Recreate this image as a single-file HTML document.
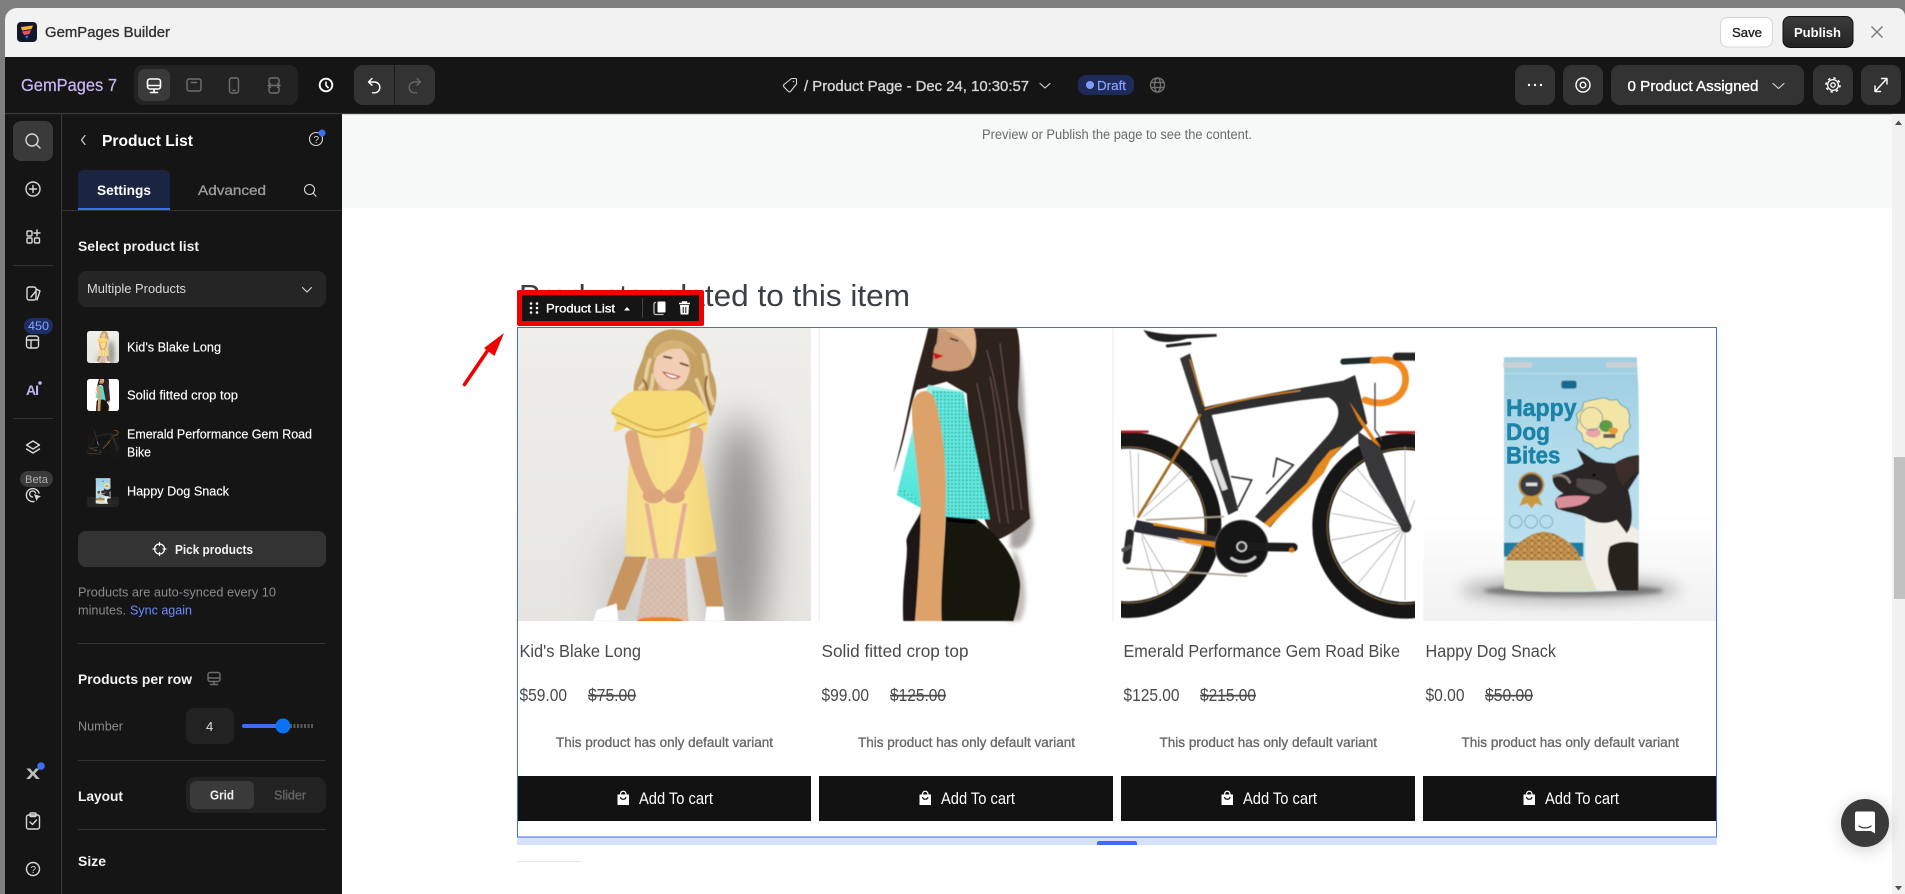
<!DOCTYPE html>
<html><head><meta charset="utf-8"><title>GemPages Builder</title>
<style>
html,body{margin:0;padding:0;background:#fff;width:1905px;height:894px;overflow:hidden}
svg{display:block}
text{font-family:"Liberation Sans",sans-serif;white-space:pre}
.w{fill:#fff}
.m{stroke:currentColor;stroke-width:.35}
.i{fill:none;stroke:#d8d8d8;stroke-width:1.4;stroke-linecap:round;stroke-linejoin:round}
.c{fill:none;stroke:#d8d8d8;stroke-width:1.1;stroke-linecap:round;stroke-linejoin:round}
.b{fill:none;stroke:#fff;stroke-width:1.6;stroke-linecap:round;stroke-linejoin:round}
.d{fill:none;stroke:#6f6f6f;stroke-width:1.4;stroke-linecap:round;stroke-linejoin:round}
.title{font-size:17.5px;fill:#4a4a4a}
.price{font-size:17.5px;fill:#4a4a4a}
.var{font-size:13.5px;fill:#6a6a6a;stroke:#6a6a6a;stroke-width:.35}
.cart{font-size:16.5px;fill:#fff}
.pl{font-size:13px;fill:#fff;color:#fff;stroke:#fff;stroke-width:.15}
</style></head>
<body>
<svg xmlns="http://www.w3.org/2000/svg" width="1905" height="894" viewBox="0 0 1905 894">
<defs>
<filter id="bl40" x="-80%" y="-50%" width="260%" height="200%"><feGaussianBlur stdDeviation="55"/></filter>
<filter id="bl20" x="-50%" y="-50%" width="200%" height="200%"><feGaussianBlur stdDeviation="22"/></filter>
<filter id="bl6" x="-30%" y="-30%" width="160%" height="160%"><feGaussianBlur stdDeviation="6"/></filter>
<filter id="soft" x="-5%" y="-5%" width="110%" height="110%"><feGaussianBlur stdDeviation="1.8"/></filter>
<filter id="sh" x="-50%" y="-50%" width="200%" height="200%"><feGaussianBlur stdDeviation="7"/></filter>
<linearGradient id="floor" x1="0" y1="0" x2="0" y2="1"><stop offset="0" stop-color="#fff"/><stop offset="1" stop-color="#f1f1f1"/></linearGradient>
<linearGradient id="bag" x1="0" y1="0" x2="0" y2="1"><stop offset="0" stop-color="#9ccde0"/><stop offset=".4" stop-color="#b2dbeb"/><stop offset="1" stop-color="#bfe3f1"/></linearGradient>
<linearGradient id="pub" x1="0" y1="0" x2="0" y2="1"><stop offset="0" stop-color="#3d3d3d"/><stop offset="1" stop-color="#232323"/></linearGradient>
<linearGradient id="dress" x1="0" y1="0" x2="1" y2="0"><stop offset="0" stop-color="#f3dc8e"/><stop offset=".6" stop-color="#fae18a"/><stop offset="1" stop-color="#efd27a"/></linearGradient>
<linearGradient id="gbg" x1="0" y1="0" x2="0" y2="1"><stop offset="0" stop-color="#efeeeb"/><stop offset="1" stop-color="#e6e5e2"/></linearGradient>
<linearGradient id="top" x1="0" y1="0" x2="0" y2="1"><stop offset="0" stop-color="#9bf3ea"/><stop offset="1" stop-color="#3fe3d8"/></linearGradient>
<pattern id="net" width="14" height="14" patternUnits="userSpaceOnUse" patternTransform="rotate(45)"><path d="M0 0H14M0 0V14" stroke="#dca58c" stroke-width="3"/></pattern>
<pattern id="mesh" width="11" height="11" patternUnits="userSpaceOnUse"><rect width="11" height="11" fill="#62e8dd"/><rect x="3" y="3" width="4" height="4" fill="#1d8580"/></pattern>
<pattern id="kib" width="22" height="18" patternUnits="userSpaceOnUse"><rect width="22" height="18" fill="#b98745"/><circle cx="6" cy="5" r="5" fill="#d0a25f"/><circle cx="17" cy="13" r="5" fill="#c3924e"/><circle cx="14" cy="4" r="2" fill="#7c5524"/><circle cx="5" cy="14" r="2.500" fill="#7c5524"/></pattern>
<clipPath id="c1"><rect x="233" y="203" width="880" height="880"/></clipPath>
<clipPath id="c3"><rect x="33" y="20" width="882" height="883"/></clipPath>
<clipPath id="c4"><rect x="10" y="24" width="878" height="879"/></clipPath>
<clipPath id="t1"><rect x="87" y="331" width="32" height="32" rx="3"/></clipPath>
<clipPath id="t2"><rect x="87" y="379" width="32" height="32" rx="3"/></clipPath>
<clipPath id="t3"><rect x="87" y="427" width="32" height="32" rx="3"/></clipPath>
<clipPath id="t4"><rect x="87" y="475" width="32" height="32" rx="3"/></clipPath>

<g id="girl" clip-path="url(#c1)">
 <rect x="233" y="203" width="880" height="880" fill="url(#gbg)"/>
 <ellipse cx="900" cy="820" rx="85" ry="350" fill="#85827e" opacity=".85" filter="url(#bl40)"/>
 <ellipse cx="560" cy="1000" rx="80" ry="200" fill="#b9b7b3" opacity=".5" filter="url(#bl40)"/>
 <g filter="url(#soft)">
 <path d="M585 415C570 370 600 320 610 290C620 235 660 205 705 208C770 212 815 265 812 330C835 370 835 425 812 470C795 440 770 395 745 395L610 412Z" fill="#c5a063"/>
 <path d="M600 385C625 360 615 330 630 300M620 405C640 390 635 360 640 345M790 285C805 330 795 380 820 430M770 360C785 395 790 420 805 450" fill="none" stroke="#e6cf9f" stroke-width="11" stroke-linecap="round"/>
 <path d="M610 360C630 390 620 400 605 405M800 350C790 390 800 420 810 450" fill="none" stroke="#96743f" stroke-width="7" stroke-linecap="round"/>
 <rect x="655" y="370" width="55" height="40" fill="#dfae8a"/>
 <ellipse cx="695" cy="325" rx="54" ry="66" fill="#f2cfb4" transform="rotate(10 695 325)"/>
 <path d="M640 285C655 225 745 225 770 290C735 258 685 255 640 300Z" fill="#d4b177"/>
 <path d="M672 290l22 4M722 310l22 7" stroke="#6b4a36" stroke-width="6" stroke-linecap="round"/>
 <path d="M670 336C682 355 705 360 718 350Z" fill="#fff" stroke="#c4605a" stroke-width="4"/>
 <path d="M565 620L590 510L760 510L790 620L830 870C780 900 620 905 555 880Z" fill="url(#dress)"/>
 <path d="M620 730L650 895M735 730L705 895" stroke="#e3ae97" stroke-width="13"/>
 <path d="M575 530C585 600 610 670 640 705M770 520C770 585 745 660 700 705" fill="none" stroke="#dfa87d" stroke-width="40" stroke-linecap="round"/>
 <ellipse cx="640" cy="708" rx="32" ry="22" fill="#dba47d"/><ellipse cx="703" cy="708" rx="32" ry="22" fill="#dba47d"/>
 <path d="M510 452C535 425 560 395 590 392L745 392C775 405 805 445 805 480L797 525C782 495 770 485 755 490C725 530 670 548 625 532C595 505 570 490 540 510L520 516L530 482Z" fill="#f6da76"/>
 <path d="M515 458C570 480 610 510 650 510C695 510 745 480 800 455M530 488C570 498 610 530 650 530C690 530 745 510 798 490" fill="none" stroke="#d4ae49" stroke-width="5"/>
 <path d="M560 890H625L560 1050H500Z" fill="#c8945f" transform="translate(-5 0)"/>
 <path d="M765 890H828L850 1045H800Z" fill="#c8945f"/>
 <path d="M625 895H735L745 1083H590Z" fill="#d6c3b5"/><path d="M625 895H735L745 1083H590Z" fill="url(#net)"/>
 <path d="M470 1050L530 1030L535 1083H460ZM800 1040H850L855 1083H795Z" fill="#fff"/>
 <ellipse cx="660" cy="1083" rx="70" ry="12" fill="#e8842b"/>
 </g>
</g>

<g id="woman">
 <rect x="58" y="54" width="880" height="880" fill="#fff"/>
 <path d="M58 54V934M938 54V934" stroke="#eee" stroke-width="3"/>
 <path d="M650 90C680 180 670 420 700 640C690 700 660 730 630 710Z" fill="#aaa5a2" filter="url(#bl6)"/>
 <path d="M650 730C680 800 685 890 660 933H620L640 720Z" fill="#c2bbb5" filter="url(#bl6)"/>
 <g filter="url(#soft)">
 <path d="M385 54L650 54C670 120 650 240 655 300C680 420 680 540 690 625C650 660 620 680 590 690C560 660 540 600 520 500L500 250L440 215L350 240C330 280 320 380 280 490C310 380 320 320 335 250C350 180 370 120 385 54Z" fill="#2e201f"/>
 <path d="M560 120C600 260 620 420 640 600M600 100C620 250 640 400 665 600M530 220C560 340 570 470 600 640M570 200C600 350 600 480 625 640" fill="none" stroke="#5e4a45" stroke-width="4"/>
 <path d="M415 54H520C535 100 530 150 505 170C470 190 420 185 395 170C405 140 395 120 410 100Z" fill="#c99a74"/>
 <path d="M430 60C470 70 510 100 520 150C530 100 530 80 520 54Z" fill="#e0b58d"/>
 <path d="M400 128L432 138L405 148Z" fill="#d00d1c"/>
 <path d="M450 85l25 8" stroke="#4a3329" stroke-width="5"/>
 <path d="M385 225L490 245L570 628L440 622L365 595L290 555L340 350Z" fill="url(#top)"/>
 <path d="M395 240L490 248L568 626L440 620Z" fill="url(#mesh)"/>
 <path d="M295 530L345 560L350 580L295 550Z" fill="url(#mesh)"/>
 <path d="M336 290C340 240 390 225 405 270C425 340 442 450 437 590C435 700 420 850 425 933H345C355 820 360 680 362 590C355 480 333 350 336 290Z" fill="#dca26a"/>
 <path d="M425 933C420 850 435 700 437 620L530 628C590 670 650 740 660 820C660 860 650 900 640 933Z" fill="#15130f"/>
 <path d="M360 610C340 650 315 680 320 700C325 760 305 800 310 933H345C355 820 362 680 362 600Z" fill="#1c1813"/>
 <path d="M440 622L530 628L525 642L440 635Z" fill="#050505"/>
 </g>
</g>

<g id="bike" clip-path="url(#c3)" fill="none" stroke-linecap="round">
 <g filter="url(#soft)">
 <circle cx="55" cy="615" r="254" stroke="#161617" stroke-width="50"/>
 <circle cx="885" cy="618" r="253" stroke="#161617" stroke-width="50"/>
 <circle cx="55" cy="615" r="234" stroke="#8e7748" stroke-width="2"/>
 <circle cx="885" cy="618" r="234" stroke="#8e7748" stroke-width="2"/>
 <path d="M33 335h80M830 337h85" stroke="#b4232b" stroke-width="7"/>
 <g stroke="#9a9a9a" stroke-width="2">
  <path d="M85 400V590M60 390L72 590M245 470L100 590M215 450L90 580M95 640L190 800M95 650L145 825M95 640L280 680"/>
  <path d="M885 620L740 445M885 620L690 510M885 620L665 580M885 620L665 660M885 620L695 730M885 620L745 790M885 620L810 825M885 620V840M885 620V380M885 620L915 540"/>
 </g>
 <path d="M100 30C120 35 150 42 200 44L320 42V50L230 56C190 70 140 70 115 50Z" fill="#222" stroke="none"/>
 <path d="M172 78L240 70" stroke="#222" stroke-width="9"/>
 <path d="M210 115L240 100L285 265L265 285Z" fill="#373435" stroke="none"/>
 <path d="M240 120L282 255" stroke="#c9802a" stroke-width="4"/>
 <path d="M280 262C400 235 560 205 700 182L735 165L760 260L772 310L745 340C700 370 650 430 480 622L435 590L655 345C690 300 700 255 655 232C550 240 420 265 305 285L345 420L385 570L355 585L300 420L265 285Z" fill="#2f2d2e" stroke="none"/>
 <path d="M312 420L345 510" stroke="#dedede" stroke-width="18" stroke-linecap="butt"/>
 <path d="M285 268C380 240 470 226 570 212" stroke="#d68420" stroke-width="4"/>
 <path d="M270 285L85 590" stroke="#a46a22" stroke-width="8"/>
 <path d="M718 245L812 380L800 382L745 300Z" fill="#e07f18" stroke="none"/>
 <path d="M697 378L660 392L620 440L590 490L462 610L478 620L640 460L665 412Z" fill="#e58a1e" stroke="none"/>
 <path d="M745 335L810 380L905 620L880 635L780 470L745 370Z" fill="#39373a" stroke="none"/>
 <circle cx="888" cy="622" r="15" fill="#333" stroke="#333"/>
 <path d="M80 600L320 650L320 680L70 635Z" fill="#2c2b30" stroke="none"/>
 <path d="M130 608L285 636L285 640L130 616ZM200 652L315 665V682L230 668Z" fill="#e58a1e" stroke="none"/>
 <path d="M110 600L340 590M50 745L410 768" stroke="#aaa18e" stroke-width="5" stroke-dasharray="4 2"/>
 <circle cx="395" cy="680" r="80" fill="#121212" stroke="#777" stroke-width="2" stroke-dasharray="4 3"/>
 <path d="M365 715C385 730 415 730 435 712" stroke="#ccc" stroke-width="8"/>
 <path d="M395 680L550 682" stroke="#1a1a1a" stroke-width="26"/>
 <circle cx="395" cy="680" r="14" fill="#2a2a2a" stroke="#ddd" stroke-width="4"/>
 <circle cx="545" cy="690" r="8" fill="#d2721f"/>
 <path d="M60 640L50 720" stroke="#2a2a2a" stroke-width="24"/>
 <path d="M40 690L60 680" stroke="#555" stroke-width="12"/>
 <path d="M365 470L425 480L385 560M490 470L500 415L550 435L470 520" stroke="#333" stroke-width="5"/>
 <path d="M700 125L790 120" stroke="#1e2a2a" stroke-width="18"/>
 <path d="M790 122C860 110 895 140 885 195C870 245 815 260 765 240" stroke="#f08a22" stroke-width="20"/>
 <path d="M860 110L915 110" stroke="#262626" stroke-width="24"/>
 <path d="M795 190V330L815 360" stroke="#444" stroke-width="4"/>
 </g>
</g>

<g id="dogbag">
 <g filter="url(#soft)">
 <path d="M252 112H650L655 200C660 400 655 780 655 805C600 820 300 820 252 805Z" fill="url(#bag)"/>
 <rect x="252" y="112" width="398" height="48" fill="#9fcfe0"/>
 <path d="M252 160H650" stroke="#c3e2ee" stroke-width="3"/>
 <rect x="250" y="127" width="86" height="16" fill="#ccd0d2"/><rect x="558" y="127" width="92" height="16" fill="#ccd0d2"/>
 <rect x="424" y="182" width="46" height="24" rx="7" fill="#14698e"/>
 <path d="M553 233l18 8 20-2 12 16 18 10 8 20-2 20 4 16-18 22-4 20-22 10-16 14-22-6-20 6-16-14-22-10-6-22-16-16 6-20-6-22 18-16 4-20 22-6Z" fill="#f3e5a5" stroke="#1d7ea3" stroke-width="2"/>
 <ellipse cx="520" cy="338" rx="22" ry="14" fill="#e9a3a9"/><ellipse cx="558" cy="318" rx="20" ry="18" fill="#5f9b46"/><ellipse cx="580" cy="332" rx="14" ry="10" fill="#eb9a3a"/><rect x="550" y="342" width="36" height="12" fill="#665d58"/>
 <circle cx="514" cy="296" r="34" fill="none" stroke="#3a7b94" stroke-width="2"/>
 <circle cx="334" cy="495" r="39" fill="#b98d38"/><circle cx="334" cy="495" r="33" fill="#3a3b40"/>
 <path d="M310 530L298 558 322 550 335 566 347 550 368 558 356 530Z" fill="#c99a3d"/>
 <rect x="318" y="488" width="34" height="10" fill="#ddd"/>
 <circle cx="287" cy="605" r="19" fill="none" stroke="#4f8fa7" stroke-width="2"/><circle cx="333" cy="605" r="19" fill="none" stroke="#4f8fa7" stroke-width="2"/><circle cx="379" cy="605" r="19" fill="none" stroke="#4f8fa7" stroke-width="2"/>
 <path d="M252 668H490V710H252Z" fill="#1d7ca2"/>
 <path d="M258 722C270 680 330 635 375 635C425 640 470 680 486 722Z" fill="url(#kib)"/>
 <path d="M252 722H500C510 760 520 790 530 812C440 818 300 818 252 805Z" fill="#dfe3c8"/>
 <path d="M495 590C500 650 490 700 500 740L530 812H655V630L600 600Z" fill="#f1eee8"/>
 <path d="M570 680C600 660 640 665 655 670V812H590C580 780 550 740 570 680Z" fill="#26211f"/>
 <path d="M470 385L530 425C560 430 590 430 600 430C620 410 645 405 657 405V460L625 510C640 570 640 620 620 640L590 600C560 615 520 610 495 590C470 580 430 575 410 565C400 545 405 530 430 520C410 510 395 490 398 470C420 455 470 450 490 430Z" fill="#2a2727"/>
 <path d="M585 430C610 410 645 405 657 405V455C640 460 620 480 610 500C595 480 585 450 585 430Z" fill="#3a2e2a"/>
 <path d="M470 475C500 480 540 470 560 500C540 540 500 520 470 500Z" fill="#4e4a47"/>
 <path d="M405 535C440 525 480 525 510 530C500 555 470 560 415 565Z" fill="#d98e9a"/>
 <path d="M398 470C420 458 445 470 450 490" fill="none" stroke="#8a8179" stroke-width="8"/>
 <circle cx="522" cy="465" r="5" fill="#111"/>
 </g>
</g>
</defs>

<!-- window chrome -->
<rect width="1905" height="894" fill="#7e7e7e"/>
<path d="M5 20a12 12 0 0 1 12-12H1897a8 8 0 0 1 8 8V57H5Z" fill="#f2f2f2"/>
<rect x="5" y="57" width="1900" height="837" fill="#151515"/>

<!-- canvas -->
<rect x="342" y="114" width="1563" height="780" fill="#fff"/>
<rect x="342" y="114" width="1550" height="94" fill="#f7f9f9"/>
<text x="982" y="139" font-size="13.5" fill="#6a6a6a" textLength="270" lengthAdjust="spacingAndGlyphs">Preview or Publish the page to see the content.</text>

<!-- title bar -->
<rect x="17" y="22" width="20" height="20" rx="4" fill="#14162a"/>
<path d="M21 27L33 25.5 31.5 29 22 30.5Z" fill="#f7b52d"/><path d="M22 31.500L31 30 29.500 34 24 35Z" fill="#ef4e6f"/><path d="M25 36L28.500 35.500 27 39Z" fill="#3f72ee"/>
<text x="45" y="37" font-size="14.5" fill="#333" class="m" style="color:#333" textLength="125" lengthAdjust="spacingAndGlyphs">GemPages Builder</text>
<rect x="1720.5" y="17.5" width="52" height="29.5" rx="7" fill="#fff" stroke="#d5d5d5"/>
<text x="1732" y="37" font-size="13" fill="#222" class="m" style="color:#222" textLength="30" lengthAdjust="spacingAndGlyphs">Save</text>
<rect x="1783" y="16.5" width="70" height="31" rx="7" fill="url(#pub)" stroke="#111"/>
<text x="1794" y="37" font-size="13" font-weight="700" fill="#fff" textLength="47" lengthAdjust="spacingAndGlyphs">Publish</text>
<path d="M1871.5 26.5l11 11M1882.5 26.5l-11 11" stroke="#777" stroke-width="1.3" fill="none"/>

<!-- toolbar -->
<rect x="5" y="113" width="1900" height="1.2" fill="#3a3a3a"/>
<text x="21" y="91" font-size="17.5" fill="#c9b8f5" class="m" style="color:#c9b8f5;stroke-width:.2" textLength="96" lengthAdjust="spacingAndGlyphs">GemPages 7</text>
<rect x="134" y="65" width="164" height="40" rx="9" fill="#232323"/>
<rect x="138" y="69" width="32" height="32" rx="7" fill="#3a3a3a"/>
<g class="b"><rect x="147.5" y="79" width="13" height="10" rx="2.5"/><path d="M148 85.5h12M154 89v3M150.5 92.5h7"/></g>
<g class="d"><rect x="187" y="79" width="14" height="12" rx="2"/><path d="M191.5 82.5h5"/>
<rect x="229.5" y="78" width="9" height="15" rx="2"/><path d="M233 90.5h2"/>
<path d="M269 83v-3a2 2 0 0 1 2-2h6a2 2 0 0 1 2 2v3M269 88v3a2 2 0 0 0 2 2h6a2 2 0 0 0 2-2v-3M268 85.5h12M270.5 83.5l-2 2 2 2M277.5 83.5l2 2-2 2"/></g>
<circle cx="326" cy="85" r="6.3" fill="none" stroke="#fff" stroke-width="1.9"/><path d="M326 81.5V85.5L328.5 88" fill="none" stroke="#fff" stroke-width="1.6"/>
<rect x="354" y="65" width="81" height="40" rx="9" fill="#333"/><rect x="394" y="65" width="1" height="40" fill="#1a1a1a"/>
<path d="M372 78.5l-3.5 3.5 3.5 3.2M369 82h5.5a5.4 5.4 0 0 1 0 10.800h-2" class="b" style="stroke-width:1.400"/>
<path d="M417 78.5l3.5 3.5-3.5 3.2M420 82h-5.5a5.4 5.4 0 0 0 0 10.800h2" fill="none" stroke="#666" stroke-width="1.400" stroke-linecap="round" stroke-linejoin="round"/>

<path d="M784 84.500L791.500 78.500h4a1 1 0 0 1 1 1v4.500L790.500 91.500a1.500 1.500 0 0 1-2 0L784 87a2 2 0 0 1 0-2.500Z" class="c"/><circle cx="793.500" cy="81.500" r=".7" fill="#d8d8d8"/>
<text x="804" y="91" font-size="14.5" fill="#d4d4d4" class="m" style="color:#d4d4d4" textLength="225" lengthAdjust="spacingAndGlyphs">/ Product Page - Dec 24, 10:30:57</text>
<path d="M1040 83.500l5 4.500 5-4.500" class="c"/>
<rect x="1078" y="75" width="56" height="20" rx="8" fill="#1e2a57"/><circle cx="1090" cy="85" r="4" fill="#7f9bff"/>
<text x="1097" y="90" font-size="13" fill="#8aa2ff" class="m" style="color:#8aa2ff;stroke-width:.2" textLength="29" lengthAdjust="spacingAndGlyphs">Draft</text>
<g class="d"><circle cx="1157.500" cy="85" r="7"/><ellipse cx="1157.500" cy="85" rx="3" ry="7"/><path d="M1151 82.500h13M1151 87.500h13"/></g>

<rect x="1515" y="65" width="40" height="40" rx="9" fill="#333"/>
<circle cx="1529" cy="85" r="1.200" fill="#fff"/><circle cx="1535" cy="85" r="1.200" fill="#fff"/><circle cx="1541" cy="85" r="1.200" fill="#fff"/>
<rect x="1563" y="65" width="40" height="40" rx="9" fill="#333"/>
<circle cx="1583" cy="85" r="7" class="b" style="stroke-width:1.400"/><circle cx="1583" cy="85" r="2.800" class="b" style="stroke-width:1.400"/>
<rect x="1611" y="65" width="193" height="40" rx="9" fill="#333"/>
<text x="1627.500" y="91" font-size="14.500" fill="#fff" class="m" style="color:#fff" textLength="131" lengthAdjust="spacingAndGlyphs">0 Product Assigned</text>
<path d="M1773 83.500l5.500 5 5.500-5" class="c"/>
<rect x="1813" y="65" width="40" height="40" rx="9" fill="#333"/>
<circle cx="1833" cy="85" r="5.400" class="b" style="stroke-width:1.300"/><circle cx="1833" cy="85" r="2.200" class="b" style="stroke-width:1.300"/><circle cx="1833" cy="85" r="7" fill="none" stroke="#fff" stroke-width="1.500" stroke-dasharray="2.500 3"/>
<rect x="1861" y="65" width="40" height="40" rx="9" fill="#333"/>
<path d="M1875 91.500l12-13M1881.500 78.500h5.500v5.500M1875 86v5.500h5.500" class="b" style="stroke-width:1.400"/>

<!-- left rail -->
<rect x="61" y="114" width="1" height="780" fill="#3a3a3a"/>
<rect x="13" y="121" width="40" height="40" rx="8" fill="#3a3a3a"/>
<circle cx="32" cy="140" r="6" class="i"/><path d="M36.500 144.500l3.500 3.500" class="i"/>
<circle cx="33" cy="189" r="7" class="i"/><path d="M33 185.500v7M29.500 189h7" class="i"/>
<g class="i"><rect x="27" y="231" width="5" height="5" rx="1"/><rect x="27" y="238" width="5" height="5" rx="1"/><rect x="34.500" y="238" width="5" height="5" rx="1"/><path d="M37 230v6M34 233h6"/></g>
<rect x="13" y="265" width="40" height="1" fill="#333"/>
<g class="i"><rect x="27" y="287" width="9" height="13" rx="2"/><path d="M36 289l4 2-3 9M31 297l5-6"/></g>
<rect x="24" y="318" width="29" height="16" rx="8" fill="#1f2f66"/>
<text x="28" y="330" font-size="11.500" fill="#8aa5ff" textLength="21" lengthAdjust="spacingAndGlyphs">450</text>
<g class="i"><rect x="26.500" y="336" width="12" height="12" rx="2.500"/><path d="M26.500 340h12M31 340v8"/></g>
<text x="26" y="395" font-size="14" font-weight="700" fill="#c4b3f2" textLength="13">AI</text><circle cx="40" cy="383" r="1.800" fill="#c4b3f2"/>
<rect x="13" y="418" width="40" height="1" fill="#333"/>
<g class="i"><path d="M33 441l6.500 4-6.500 4-6.500-4Z"/><path d="M26.500 449l6.500 4 6.500-4"/></g>
<rect x="20" y="471" width="33" height="16" rx="8" fill="#3a3a3a"/>
<text x="25" y="483" font-size="11" fill="#b0b0b0" textLength="23" lengthAdjust="spacingAndGlyphs">Beta</text>
<path d="M39 493a6.500 6.500 0 1 0-5 8.500M35.500 493a3 3 0 1 0-3 4" class="i"/><path d="M34 494l7 2.500-3 1.500-1.500 3Z" fill="#d8d8d8"/>
<text x="26" y="779" font-size="19" font-weight="700" fill="#bdbdbd" textLength="14" lengthAdjust="spacingAndGlyphs">x</text><circle cx="41" cy="766" r="3.800" fill="#3d6cf5"/>
<g class="i"><rect x="26.500" y="815" width="13" height="14" rx="2"/><rect x="30" y="813" width="6" height="3.500" rx="1"/><path d="M30 822l2.500 2.500 4-4.500"/></g>
<circle cx="33" cy="869" r="6.500" class="i"/><text x="30.500" y="873" font-size="10" fill="#d8d8d8">?</text>

<!-- panel -->
<path d="M85 135.500l-3.500 4.500 3.500 4.500" class="c"/>
<text x="102" y="146" font-size="16" font-weight="700" fill="#fff" textLength="91" lengthAdjust="spacingAndGlyphs">Product List</text>
<circle cx="316" cy="139" r="6.500" class="c"/><text x="313.500" y="143" font-size="10" fill="#d8d8d8">?</text>
<circle cx="322" cy="133" r="3.500" fill="#3d6cf5"/>
<path d="M78 176a6 6 0 0 1 6-6h80a6 6 0 0 1 6 6v34H78Z" fill="#1b2440"/>
<rect x="78" y="208" width="92" height="2" fill="#3d6cf5"/>
<rect x="62" y="210" width="280" height="1" fill="#333"/>
<text x="97" y="195" font-size="14" font-weight="700" fill="#fff" textLength="54" lengthAdjust="spacingAndGlyphs">Settings</text>
<text x="198" y="195" font-size="14" fill="#9a9a9a" class="m" style="color:#9a9a9a" textLength="68" lengthAdjust="spacingAndGlyphs">Advanced</text>
<circle cx="309.500" cy="189.500" r="5" class="c"/><path d="M313 193l3 3.200" class="c"/>
<text x="78" y="251" font-size="14" font-weight="700" fill="#f0f0f0" textLength="121" lengthAdjust="spacingAndGlyphs">Select product list</text>
<rect x="78" y="271" width="248" height="36" rx="8" fill="#252525"/>
<text x="87" y="293" font-size="13" fill="#d8d8d8" textLength="99" lengthAdjust="spacingAndGlyphs">Multiple Products</text>
<path d="M302.500 287.500l4.500 4.500 4.500-4.500" class="c"/>

<rect x="87" y="331" width="32" height="32" rx="3" fill="#ebeae7"/>
<g clip-path="url(#t1)"><use href="#girl" transform="translate(87,331) scale(.03636) translate(-233,-203)"/></g>
<rect x="87" y="379" width="32" height="32" rx="3" fill="#fff"/>
<g clip-path="url(#t2)"><use href="#woman" transform="translate(87,379) scale(.03636) translate(-58,-54)"/></g>
<g clip-path="url(#t3)" opacity=".65"><use href="#bike" transform="translate(87,427) scale(.03636) translate(-33,-20)"/></g>
<rect x="87" y="475" width="32" height="32" rx="3" fill="#252525"/>
<rect x="87" y="475" width="32" height="22" fill="#151515"/>
<g clip-path="url(#t4)"><use href="#dogbag" transform="translate(87,475) scale(.03636) translate(-10,-24)"/></g>

<text x="127" y="351.500" class="pl" textLength="94" lengthAdjust="spacingAndGlyphs">Kid's Blake Long</text>
<text x="127" y="399.500" class="pl" textLength="111" lengthAdjust="spacingAndGlyphs">Solid fitted crop top</text>
<text x="127" y="438.500" class="pl" textLength="185" lengthAdjust="spacingAndGlyphs">Emerald Performance Gem Road</text>
<text x="127" y="456.500" class="pl" textLength="24" lengthAdjust="spacingAndGlyphs">Bike</text>
<text x="127" y="495.500" class="pl" textLength="102" lengthAdjust="spacingAndGlyphs">Happy Dog Snack</text>

<rect x="78" y="531" width="248" height="36" rx="8" fill="#333"/>
<circle cx="159.500" cy="549" r="5" class="b" style="stroke-width:1.200"/><path d="M159.500 542.500v3M159.500 552.500v3M153 549h3M163 549h3" class="b" style="stroke-width:1.200"/>
<text x="175" y="554" font-size="13" font-weight="700" fill="#f2f2f2" textLength="78" lengthAdjust="spacingAndGlyphs">Pick products</text>
<text x="78" y="596.500" font-size="13" fill="#8b8b8b" textLength="198" lengthAdjust="spacingAndGlyphs">Products are auto-synced every 10</text>
<text x="78" y="614.500" font-size="13" fill="#8b8b8b" textLength="48" lengthAdjust="spacingAndGlyphs">minutes.</text>
<text x="130" y="614.500" font-size="13" fill="#6d8bff" textLength="62" lengthAdjust="spacingAndGlyphs">Sync again</text>
<rect x="78" y="643" width="248" height="1" fill="#333"/>
<text x="78" y="684" font-size="14" font-weight="700" fill="#f2f2f2" textLength="114" lengthAdjust="spacingAndGlyphs">Products per row</text>
<g class="d"><rect x="208" y="672.500" width="12" height="9" rx="2"/><path d="M208.500 678h11M214 681.500v3M210.500 684.500h7"/></g>
<text x="78" y="730.500" font-size="13" fill="#8b8b8b" textLength="45" lengthAdjust="spacingAndGlyphs">Number</text>
<rect x="186" y="708" width="48" height="36" rx="8" fill="#222"/>
<text x="206" y="731" font-size="13" fill="#e0e0e0" textLength="8">4</text>
<path d="M283 726H313" stroke="#5a5a5a" stroke-width="4" stroke-dasharray="2 1.500"/>
<path d="M244 726H283" stroke="#3d6cf5" stroke-width="4" stroke-linecap="round"/>
<circle cx="283" cy="726" r="7.500" fill="#0a72f5"/>
<rect x="78" y="760" width="248" height="1" fill="#333"/>
<text x="78" y="801" font-size="14" font-weight="700" fill="#f2f2f2" textLength="45" lengthAdjust="spacingAndGlyphs">Layout</text>
<rect x="186" y="777" width="140" height="36" rx="9" fill="#222"/>
<rect x="190" y="781" width="64" height="28" rx="6" fill="#3a3a3a"/>
<text x="210" y="799.500" font-size="12.500" font-weight="700" fill="#efefef" textLength="24" lengthAdjust="spacingAndGlyphs">Grid</text>
<text x="274" y="799.500" font-size="12.500" fill="#666" class="m" style="color:#666" textLength="32" lengthAdjust="spacingAndGlyphs">Slider</text>
<rect x="78" y="829" width="248" height="1" fill="#333"/>
<text x="78" y="866" font-size="14" font-weight="700" fill="#f2f2f2" textLength="28" lengthAdjust="spacingAndGlyphs">Size</text>

<!-- heading -->
<text x="519" y="306" font-size="30.500" fill="#3a3f44" textLength="391" lengthAdjust="spacingAndGlyphs">Products related to this item</text>

<!-- product images -->
<use href="#girl" transform="translate(440,260) scale(.33333)"/>
<use href="#woman" transform="translate(800,310) scale(.33333)"/>
<path d="M1113 327V621" stroke="#f0f0f0"/>
<use href="#bike" transform="translate(1110,320) scale(.33333)"/>
<g transform="translate(1420,320) scale(.33333)" clip-path="url(#c4)">
 <rect x="10" y="24" width="878" height="879" fill="#fff"/>
 <rect x="10" y="580" width="878" height="323" fill="url(#floor)"/>
 <ellipse cx="450" cy="810" rx="330" ry="40" fill="#b5b5b5" filter="url(#bl20)"/>
 <ellipse cx="460" cy="812" rx="270" ry="18" fill="#777" filter="url(#bl6)"/>
 <use href="#dogbag"/>
 <g font-weight="700" font-size="71" fill="#1b82a8" stroke="#1b82a8" stroke-width="1.500">
  <text x="258" y="288" textLength="212" lengthAdjust="spacingAndGlyphs">Happy</text>
  <text x="258" y="360" textLength="132" lengthAdjust="spacingAndGlyphs">Dog</text>
  <text x="258" y="430" textLength="163" lengthAdjust="spacingAndGlyphs">Bites</text>
 </g>
</g>

<!-- product info -->
<text x="519.500" y="657" class="title" textLength="121.500" lengthAdjust="spacingAndGlyphs">Kid's Blake Long</text>
<text x="821.500" y="657" class="title" textLength="147" lengthAdjust="spacingAndGlyphs">Solid fitted crop top</text>
<text x="1123.500" y="657" class="title" textLength="276.500" lengthAdjust="spacingAndGlyphs">Emerald Performance Gem Road Bike</text>
<text x="1425.500" y="657" class="title" textLength="130.500" lengthAdjust="spacingAndGlyphs">Happy Dog Snack</text>

<text x="519.500" y="701" class="price" textLength="47.500" lengthAdjust="spacingAndGlyphs">$59.00</text>
<text x="588" y="701" class="price" textLength="48" lengthAdjust="spacingAndGlyphs" text-decoration="line-through">$75.00</text>
<text x="821.500" y="701" class="price" textLength="47.500" lengthAdjust="spacingAndGlyphs">$99.00</text>
<text x="890" y="701" class="price" textLength="56" lengthAdjust="spacingAndGlyphs" text-decoration="line-through">$125.00</text>
<text x="1123.500" y="701" class="price" textLength="56" lengthAdjust="spacingAndGlyphs">$125.00</text>
<text x="1200" y="701" class="price" textLength="56" lengthAdjust="spacingAndGlyphs" text-decoration="line-through">$215.00</text>
<text x="1425.500" y="701" class="price" textLength="39" lengthAdjust="spacingAndGlyphs">$0.00</text>
<text x="1485" y="701" class="price" textLength="48" lengthAdjust="spacingAndGlyphs" text-decoration="line-through">$50.00</text>

<text x="556" y="747" class="var" textLength="217" lengthAdjust="spacingAndGlyphs">This product has only default variant</text>
<text x="858" y="747" class="var" textLength="217" lengthAdjust="spacingAndGlyphs">This product has only default variant</text>
<text x="1159.500" y="747" class="var" textLength="217.500" lengthAdjust="spacingAndGlyphs">This product has only default variant</text>
<text x="1461.500" y="747" class="var" textLength="217.500" lengthAdjust="spacingAndGlyphs">This product has only default variant</text>

<rect x="518" y="776" width="293" height="45" fill="#121212"/>
<rect x="819" y="776" width="294" height="45" fill="#121212"/>
<rect x="1121" y="776" width="294" height="45" fill="#121212"/>
<rect x="1423" y="776" width="293" height="45" fill="#121212"/>

<g id="cartbag"><path d="M617.500 794.500H629V805H617.500Z" fill="#fff"/><path d="M620.500 795.500v-1.500a2.700 2.700 0 0 1 5.500 0v1.500" fill="none" stroke="#fff" stroke-width="1.300"/><path d="M620.500 797a2.800 2.800 0 0 0 5.500 0" fill="none" stroke="#121212" stroke-width="1.200"/></g>
<use href="#cartbag" x="302"/><use href="#cartbag" x="604"/><use href="#cartbag" x="906"/>
<text x="639" y="804" class="cart" textLength="74" lengthAdjust="spacingAndGlyphs">Add To cart</text>
<text x="941" y="804" class="cart" textLength="74" lengthAdjust="spacingAndGlyphs">Add To cart</text>
<text x="1243" y="804" class="cart" textLength="74" lengthAdjust="spacingAndGlyphs">Add To cart</text>
<text x="1545" y="804" class="cart" textLength="74" lengthAdjust="spacingAndGlyphs">Add To cart</text>

<!-- selection box -->
<rect x="517.500" y="327.500" width="1199" height="509.500" fill="none" stroke="#3d6cf5" stroke-width="1"/>
<rect x="517" y="837.500" width="1200" height="7.500" fill="#d8e1fb"/>
<path d="M1097 845v-2a2 2 0 0 1 2-2h36a2 2 0 0 1 2 2v2Z" fill="#3d6cf5"/>
<rect x="517" y="861" width="64" height="1" fill="#e6e6e6"/>

<!-- floating component toolbar with red highlight -->
<rect x="517" y="290" width="187" height="36" rx="2" fill="#f00000"/>
<rect x="522" y="295" width="177" height="26" rx="1" fill="#151515"/>
<g fill="#fff"><circle cx="531" cy="303.500" r="1.300"/><circle cx="537" cy="303.500" r="1.300"/><circle cx="531" cy="308" r="1.300"/><circle cx="537" cy="308" r="1.300"/><circle cx="531" cy="312.500" r="1.300"/><circle cx="537" cy="312.500" r="1.300"/></g>
<text x="546" y="312.500" font-size="12" fill="#fff" class="m" style="color:#fff" textLength="69" lengthAdjust="spacingAndGlyphs">Product List</text>
<path d="M624 310.500l3-3.500 3 3.500Z" fill="#fff"/>
<rect x="642" y="298" width="1" height="20" fill="#444"/>
<path d="M656 302.500h-.5a1.500 1.500 0 0 0-1.500 1.500v9a1.500 1.500 0 0 0 1.500 1.500h8" fill="none" stroke="#bbb" stroke-width="1.300"/>
<rect x="657.500" y="301.500" width="8" height="11" rx="1" fill="#fff"/>
<path d="M679 303.500h11M682.500 303.500v-1.500h4v1.500" fill="none" stroke="#fff" stroke-width="1.400"/>
<path d="M680 305h9l-.6 9.500h-7.800Z" fill="#fff"/><path d="M683.200 307v6M685.800 307v6" stroke="#151515" stroke-width="1"/>

<!-- annotation arrow -->
<path d="M464.500 384.500L490 347" stroke="#f00000" stroke-width="3.600" stroke-linecap="round" fill="none"/>
<path d="M504 333L484 348L494.500 356Z" fill="#f00000"/>

<!-- scrollbar -->
<rect x="1892" y="114" width="13" height="780" fill="#f1f1f1"/>
<rect x="1894" y="457" width="11" height="142" fill="#c1c1c1"/>
<path d="M1895 125l3.500-4.500 3.500 4.500Z" fill="#505050"/>
<path d="M1895 886l3.500 4.500 3.500-4.500Z" fill="#505050"/>

<!-- chat bubble -->
<ellipse cx="1865" cy="826" rx="26" ry="26" fill="#888" opacity=".3" filter="url(#sh)"/>
<circle cx="1865" cy="823" r="24" fill="#3a3a3a"/>
<path d="M1857 811.500h16a2 2 0 0 1 2 2v20l-4-2.500h-14a2 2 0 0 1-2-2v-15.500a2 2 0 0 1 2-2Z" fill="#fff"/>
<path d="M1859 826c3 2.500 9 2.500 12 0" fill="none" stroke="#3a3a3a" stroke-width="1.300" stroke-linecap="round"/>
</svg>
</body></html>
